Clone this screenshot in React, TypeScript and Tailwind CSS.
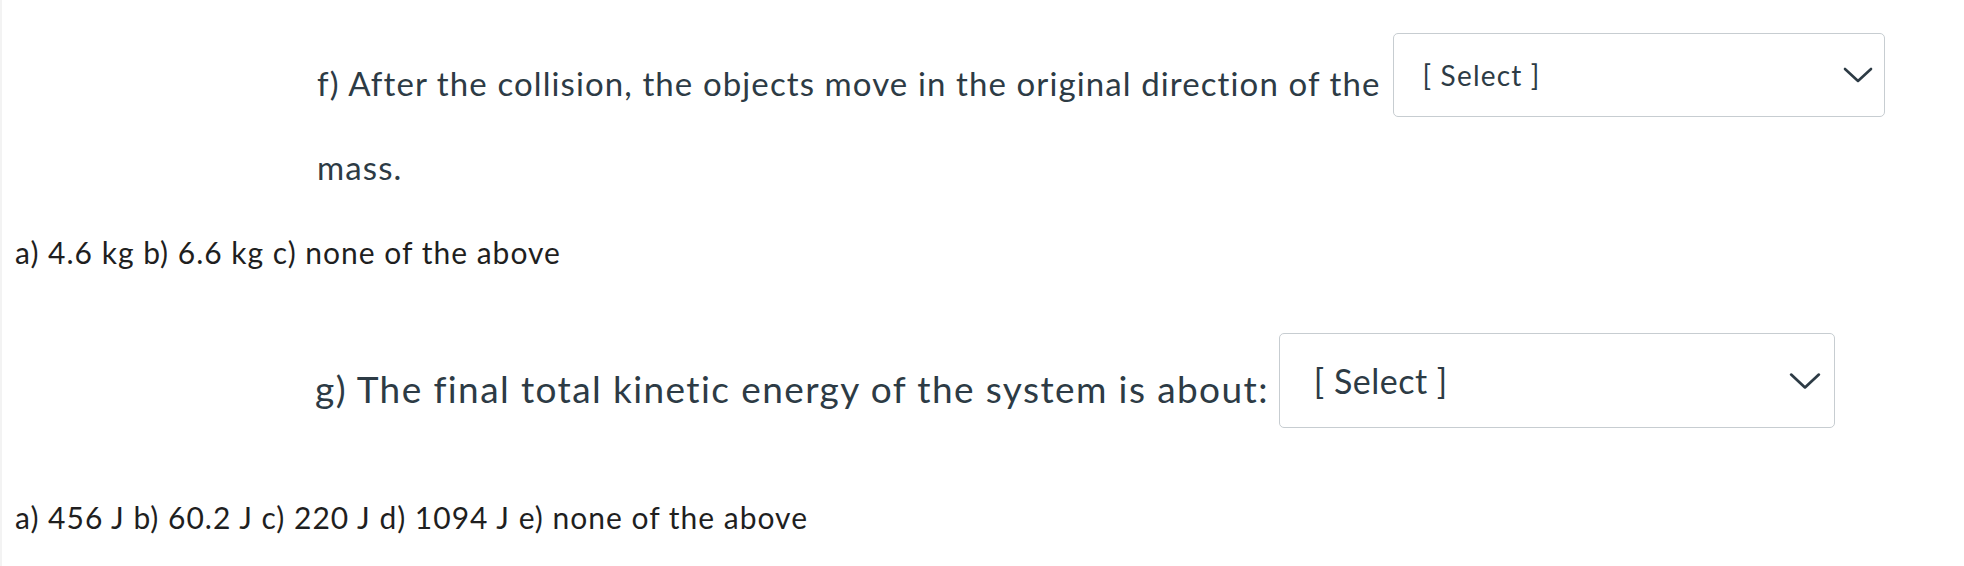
function Chevron({ w, h }: { w: number; h: number }) {
  return (
    <svg width={w} height={h} viewBox="0 0 30 16" fill="none" className="shrink-0">
      <path d="M2 2 L15 14 L28 2" stroke="#2d3b45" strokeWidth="2.6" strokeLinecap="round" strokeLinejoin="round" />
    </svg>
  )
}

function SelectBox({ className, textClass, w, h }: { className: string; textClass: string; w: number; h: number }) {
  return (
    <div className={`flex shrink-0 items-center justify-between rounded-[5px] border border-[#c7cdd1] bg-white ${className}`}>
      <span className={`whitespace-nowrap text-[#2d3b45] ${textClass}`}>[ Select ]</span>
      <Chevron w={w} h={h} />
    </div>
  )
}

export default function App() {
  return (
    <div className="h-[566px] w-full overflow-hidden border-l-2 border-[#f3f3f3] bg-white font-['Lato','Liberation_Sans',sans-serif]">
      {/* question f */}
      <div className="flex items-end pl-[315px] pt-[33px]">
        <span className="mb-[17px] whitespace-nowrap text-[33px] leading-[33px] tracking-[1.1px] text-[#2d3b45]">
          f) After the collision, the objects move in the original direction of the
        </span>
        <SelectBox
          className="ml-[13px] h-[84px] w-[492px] pl-[28px] pr-[11px]"
          textClass="text-[28px] leading-[28px] tracking-[1.2px]"
          w={30}
          h={16}
        />
      </div>
      <div className="mt-[34px] pl-[315px] text-[33px] leading-[33px] tracking-[1.1px] text-[#2d3b45]">mass.</div>

      <div className="mt-[53px] whitespace-nowrap pl-[13px] text-[30px] leading-[30px] tracking-[1px] text-[#1f1f1f]">
        a) 4.6 kg b) 6.6 kg c) none of the above
      </div>

      {/* question g */}
      <div className="mt-[66px] flex items-end pl-[313px]">
        <span className="mb-[21px] whitespace-nowrap text-[37px] leading-[37px] tracking-[1.4px] text-[#2d3b45]">
          g) The final total kinetic energy of the system is about:
        </span>
        <SelectBox
          className="ml-[10px] h-[95px] w-[556px] pl-[34px] pr-[13px]"
          textClass="text-[34px] leading-[34px] tracking-[0.5px]"
          w={32}
          h={18}
        />
      </div>

      <div className="mt-[74px] whitespace-nowrap pl-[13px] text-[30px] leading-[30px] tracking-[1px] text-[#1f1f1f]">
        a) 456 J b) 60.2 J c) 220 J d) 1094 J e) none of the above
      </div>
    </div>
  )
}
